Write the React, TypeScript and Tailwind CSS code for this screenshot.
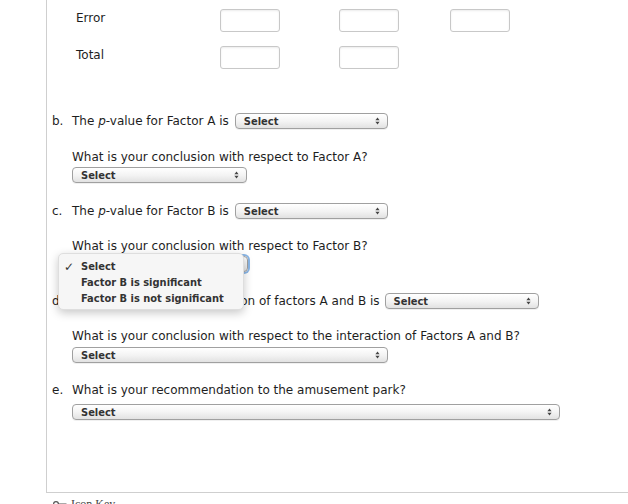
const font = { fontFamily: '"DejaVu Sans", Verdana, sans-serif' };
const boldFont = { fontFamily: '"DejaVu Sans Condensed", "Liberation Sans", Arial, sans-serif' };

function Arrows() {
  return (
    <svg width="5" height="8" viewBox="0 0 5 8" className="shrink-0">
      <path d="M2.5 0.5 L4.6 3.2 L0.4 3.2 Z" fill="#444" />
      <path d="M2.5 7.5 L4.6 4.8 L0.4 4.8 Z" fill="#444" />
    </svg>
  );
}

function SelectBox({ width, focused = false }: { width: string; focused?: boolean }) {
  return (
    <div
      className={`${width} h-[16px] shrink-0 rounded-[4px] border border-[#a0a0a0] bg-gradient-to-b from-white via-[#f4f4f4] to-[#e2e2e2] flex items-center justify-between pl-[8px] pr-[7px] ${
        focused ? 'shadow-[0_0_0_2px_#8ab6e6]' : 'shadow-[0_1px_0_rgba(0,0,0,0.06)]'
      }`}
    >
      <span className="text-[11px] leading-none font-bold text-[#333]" style={boldFont}>
        Select
      </span>
      <Arrows />
    </div>
  );
}

function Input() {
  return <div className="w-[60px] h-[23px] rounded-[3px] border border-[#c8c8c8] bg-white shadow-[inset_0_1px_2px_rgba(0,0,0,0.08)]" />;
}

export default function App() {
  return (
    <div className="relative w-[628px] h-[504px] overflow-hidden bg-white text-[12px] text-[#1e1e1e]" style={font}>
      <div className="ml-[46px] h-[493px] border-l border-b border-[#cfcfcf]">
        {/* ANOVA table tail */}
        <div className="pt-[9px]">
          <div className="flex items-start h-[23px]">
            <span className="ml-[29px] w-[144px] leading-[18px]">Error</span>
            <Input />
            <div className="w-[59px]" />
            <Input />
            <div className="w-[51px]" />
            <Input />
          </div>
          <div className="flex items-start h-[23px] mt-[14px]">
            <span className="ml-[29px] w-[144px] leading-[18px]">Total</span>
            <Input />
            <div className="w-[59px]" />
            <Input />
          </div>
        </div>

        <div className="pl-[5px]">
          {/* b */}
          <div className="mt-[43px] h-[18px] flex items-center">
            <span className="w-[20px]">b.</span>
            <span>
              The <i>p</i>-value for Factor A is
            </span>
            <div className="ml-[6px]">
              <SelectBox width="w-[153px]" />
            </div>
          </div>
          <div className="mt-[18px] ml-[20px] h-[18px] leading-[18px]">What is your conclusion with respect to Factor A?</div>
          <div className="mt-[1px] ml-[20px]">
            <SelectBox width="w-[175px]" />
          </div>

          {/* c */}
          <div className="mt-[19px] h-[18px] flex items-center">
            <span className="w-[20px]">c.</span>
            <span>
              The <i>p</i>-value for Factor B is
            </span>
            <div className="ml-[6px]">
              <SelectBox width="w-[153px]" />
            </div>
          </div>
          <div className="mt-[17px] ml-[20px] h-[18px] leading-[18px]">What is your conclusion with respect to Factor B?</div>
          <div className="mt-[1px] ml-[20px]">
            <SelectBox width="w-[176px]" focused />
          </div>

          {/* d */}
          <div className="mt-[20px] h-[18px] flex items-center">
            <span className="w-[20px]">d.</span>
            <span>
              The <i>p</i>-value for the interaction of factors A and B is
            </span>
            <div className="ml-[5px]">
              <SelectBox width="w-[154px]" />
            </div>
          </div>
          <div className="mt-[17px] ml-[20px] h-[18px] leading-[18px]">
            What is your conclusion with respect to the interaction of Factors A and B?
          </div>
          <div className="mt-[2px] ml-[20px]">
            <SelectBox width="w-[316px]" />
          </div>

          {/* e */}
          <div className="mt-[18px] h-[18px] flex items-center">
            <span className="w-[20px]">e.</span>
            <span>What is your recommendation to the amusement park?</span>
          </div>
          <div className="mt-[5px] ml-[20px]">
            <SelectBox width="w-[488px]" />
          </div>
        </div>
      </div>

      {/* Icon key */}
      <div className="flex items-start gap-[4px] pl-[53px] pt-[5px]">
        <svg width="14" height="8" viewBox="0 0 14 8" className="mt-[2px]">
          <circle cx="3" cy="4" r="2.4" fill="none" stroke="#555" strokeWidth="1.2" />
          <path d="M5.4 4 H13.5 M11 4 V6.5 M9 4 V6" stroke="#555" strokeWidth="1.2" />
        </svg>
        <span className="text-[12px] leading-[12px] text-[#444]" style={{ fontFamily: '"Liberation Serif", serif' }}>
          Icon Key
        </span>
      </div>

      {/* Open dropdown menu */}
      <div className="absolute left-[58px] top-[253px] w-[186px] h-[57px] rounded-[5px] bg-[#f6f6f6] border border-[#dedede] shadow-[0_3px_10px_rgba(0,0,0,0.22)] pt-[5px]">
        {['Select', 'Factor B is significant', 'Factor B is not significant'].map((label, i) => (
          <div key={label} className="h-[16px] flex items-center text-[11px] font-bold text-[#333]" style={boldFont}>
            <span className="w-[22px] pl-[5px] text-[12px] font-bold" style={font}>
              {i === 0 ? '✓' : ''}
            </span>
            <span>{label}</span>
          </div>
        ))}
      </div>
    </div>
  );
}
